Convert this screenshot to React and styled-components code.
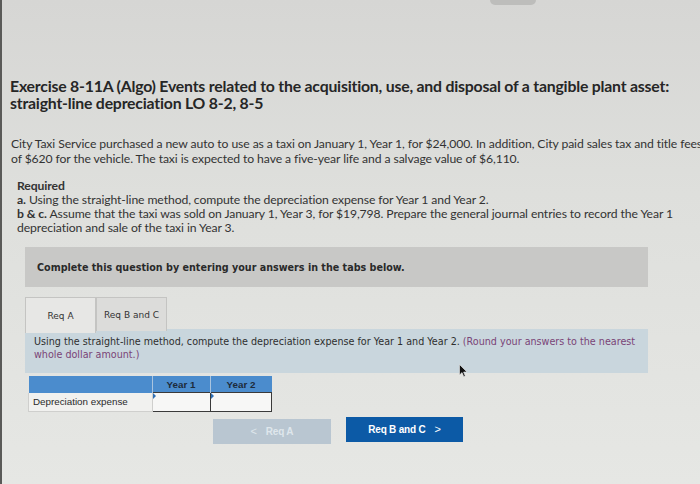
import React from "react";
import styled, { createGlobalStyle } from "styled-components";

const Global = createGlobalStyle`
  html, body { margin: 0; padding: 0; }
  body { width: 700px; height: 484px; overflow: hidden; }
`;

const Page = styled.div`
  position: relative;
  width: 698px;
  height: 484px;
  border-left: 2px solid #5a5a58;
  background: linear-gradient(180deg, #d6d6d4 0%, #dedfdc 40%, #e6e7e4 100%);
  overflow: hidden;
  font-family: Lato, "Open Sans", sans-serif;
  color: #2e2e2e;
`;

const TopBar = styled.div`
  height: 6px;
  display: flex;
  align-items: flex-start;
  padding-left: 488px;
`;

const TopButton = styled.div`
  width: 46px;
  height: 5px;
  background: #bdbdbb;
  border-radius: 0 0 6px 6px;
`;

const Content = styled.div`
  padding: 71px 0 0 8px;
`;

const Line = styled.span`
  display: block;
  white-space: nowrap;
`;

const Title = styled.h1`
  margin: 0;
  font-size: 15.8px;
  line-height: 17px;
  font-weight: 700;
  color: #262626;
  letter-spacing: -0.2px;
`;

const Para = styled.p`
  margin: 25px 0 0 1px;
  font-size: 12.2px;
  line-height: 15px;
  color: #333;
  letter-spacing: -0.1px;
`;

const Required = styled.div`
  margin: 13px 0 0 7px;
  font-size: 12.2px;
  line-height: 14px;
  color: #333;
  letter-spacing: -0.1px;
`;

const B = styled.b`
  font-weight: 700;
`;

const Question = styled.div`
  margin: 12px 0 0 15px;
  width: 623px;
  font-family: "DejaVu Sans", Verdana, sans-serif;
`;

const Banner = styled.div`
  height: 40px;
  background: #c8c8c6;
  display: flex;
  align-items: center;
  padding-left: 12px;
  font-size: 9.6px;
  font-weight: 700;
  color: #2a2a2a;
`;

const Tabs = styled.div`
  display: flex;
  margin-top: 10px;
  position: relative;
  z-index: 1;
`;

const Tab = styled.div`
  width: 71px;
  height: ${(p) => (p.$active ? 36 : 34)}px;
  box-sizing: border-box;
  display: flex;
  align-items: center;
  justify-content: center;
  font-size: 9px;
  color: #333;
  background: ${(p) => (p.$active ? "#e7e7e5" : "#dcdcda")};
  border: 1px solid #c4c4c2;
  border-bottom: none;
  margin-bottom: ${(p) => (p.$active ? -4 : -2)}px;
`;

const Info = styled.div`
  background: #c9d6dd;
  padding: 6px 10px 12px 9px;
  font-size: 9.6px;
  line-height: 13px;
  color: #2e2e2e;
`;

const Hint = styled.span`
  color: #7a4477;
`;

const Table = styled.table`
  margin: 3px 0 0 3px;
  border-collapse: collapse;
  font-family: "Liberation Sans", Arial, sans-serif;
  font-size: 9.8px;
`;

const Th = styled.th`
  background: #4b8ccd;
  height: 16px;
  padding: 0;
  width: ${(p) => p.$w}px;
  font-weight: 700;
  color: #1d2b3a;
  text-align: center;
  border-left: 1px solid #a9c4df;
  &:first-child { border-left: none; }
`;

const LabelCell = styled.td`
  background: #f1f1ef;
  height: 18px;
  padding: 0 0 0 4px;
  color: #2a2a2a;
  border: 1px solid #cfcfcd;
  border-top: none;
`;

const InputCell = styled.td`
  position: relative;
  background: #f7f7f6;
  padding: 0;
  border: 1.5px solid #3a3a3a;
`;

const Marker = styled.span`
  position: absolute;
  left: 0;
  top: 0;
  width: 0;
  height: 0;
  border-top: 3px solid transparent;
  border-bottom: 3px solid transparent;
  border-left: 3px solid #2d6fb5;
`;

const NavRow = styled.div`
  display: flex;
  gap: 15px;
  margin: 5px 0 0 188px;
  font-family: "Liberation Sans", Arial, sans-serif;
`;

const NavButton = styled.div`
  width: ${(p) => p.$w}px;
  height: 25px;
  display: flex;
  align-items: center;
  justify-content: center;
  gap: 9px;
  font-size: 10px;
  font-weight: 700;
  letter-spacing: -0.2px;
  background: ${(p) => (p.$disabled ? "#b9c6d1" : "#0c5aa6")};
  color: ${(p) => (p.$disabled ? "#dfe6ec" : "#ffffff")};
  margin-top: ${(p) => (p.$disabled ? 2 : 0)}px;
`;

const Chevron = styled.span`
  font-size: 11px;
  font-weight: 400;
`;

const Cursor = styled.svg`
  position: absolute;
  left: 457px;
  top: 364px;
`;

export default function App() {
  return (
    <Page>
      <Global />
      <TopBar>
        <TopButton />
      </TopBar>
      <Content>
        <Title>
          <Line>Exercise 8-11A (Algo) Events related to the acquisition, use, and disposal of a tangible plant asset:</Line>
          <Line>straight-line depreciation LO 8-2, 8-5</Line>
        </Title>
        <Para>
          <Line>City Taxi Service purchased a new auto to use as a taxi on January 1, Year 1, for $24,000. In addition, City paid sales tax and title fees</Line>
          <Line>of $620 for the vehicle. The taxi is expected to have a five-year life and a salvage value of $6,110.</Line>
        </Para>
        <Required>
          <Line><B>Required</B></Line>
          <Line><B>a.</B> Using the straight-line method, compute the depreciation expense for Year 1 and Year 2.</Line>
          <Line>
            <B>b &amp; c.</B> Assume that the taxi was sold on January 1, Year 3, for $19,798. Prepare the general journal entries to record the Year 1
          </Line>
          <Line>depreciation and sale of the taxi in Year 3.</Line>
        </Required>
        <Question>
          <Banner>Complete this question by entering your answers in the tabs below.</Banner>
          <Tabs>
            <Tab $active>Req A</Tab>
            <Tab>Req B and C</Tab>
          </Tabs>
          <Info>
            Using the straight-line method, compute the depreciation expense for Year 1 and Year 2.{" "}
            <Hint>(Round your answers to the nearest whole dollar amount.)</Hint>
          </Info>
          <Table>
            <thead>
              <tr>
                <Th $w={123}></Th>
                <Th $w={57}>Year 1</Th>
                <Th $w={61}>Year 2</Th>
              </tr>
            </thead>
            <tbody>
              <tr>
                <LabelCell>Depreciation expense</LabelCell>
                <InputCell><Marker /></InputCell>
                <InputCell><Marker /></InputCell>
              </tr>
            </tbody>
          </Table>
          <NavRow>
            <NavButton $w={118} $disabled>
              <Chevron>&lt;</Chevron>
              <span>Req A</span>
            </NavButton>
            <NavButton $w={117}>
              <span>Req B and C</span>
              <Chevron>&gt;</Chevron>
            </NavButton>
          </NavRow>
        </Question>
      </Content>
      <Cursor width="9" height="14" viewBox="0 0 9 14">
        <path d="M0.5 0.5 L0.5 11 L3 8.6 L4.8 12.8 L6.3 12.1 L4.6 8 L8 8 Z" fill="#111" stroke="#eee" strokeWidth="0.6" />
      </Cursor>
    </Page>
  );
}
